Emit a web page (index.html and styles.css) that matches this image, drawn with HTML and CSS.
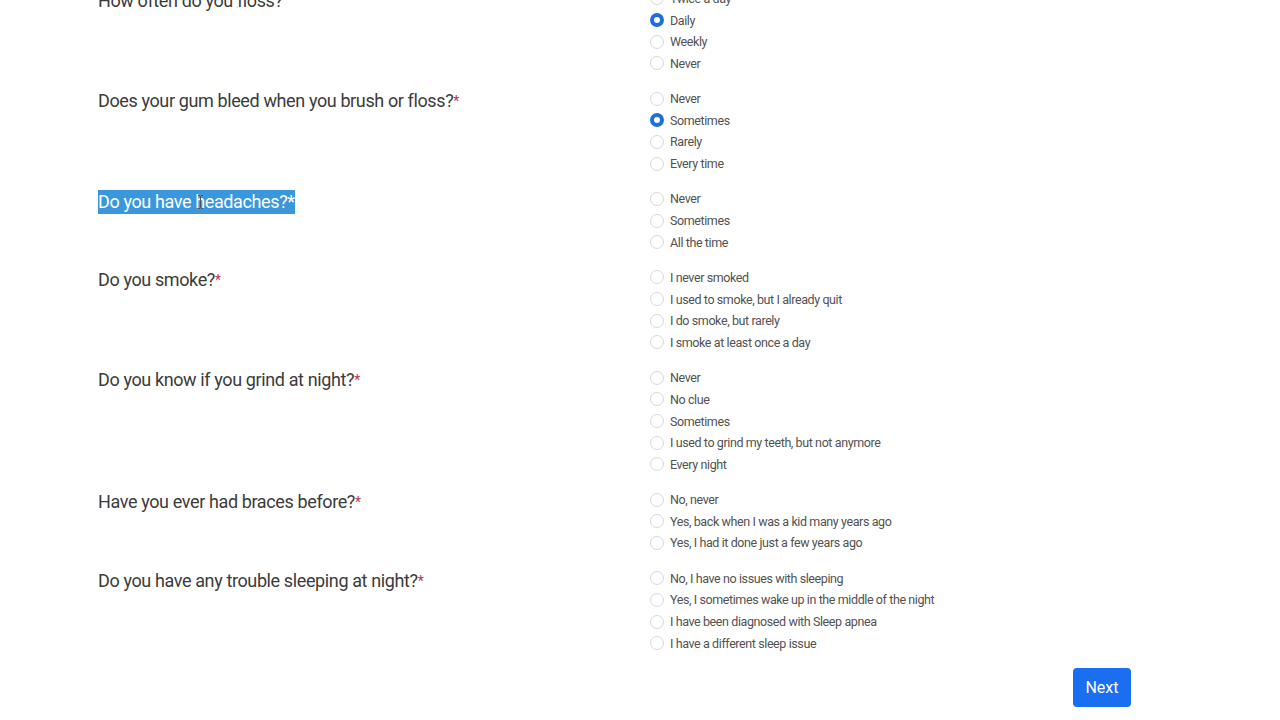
FILE: index.html
```html
<!DOCTYPE html>
<html lang="en">
<head>
<meta charset="utf-8">
<title>Questionnaire</title>
<link rel="stylesheet" href="styles.css">
</head>
<body>
<form class="survey">
  <div class="row">
    <div class="question">How often do you floss?</div>
    <div class="options">
      <label class="opt"><span class="radio"></span>Twice a day</label>
      <label class="opt"><span class="radio checked"></span>Daily</label>
      <label class="opt"><span class="radio"></span>Weekly</label>
      <label class="opt"><span class="radio"></span>Never</label>
    </div>
  </div>
  <div class="row">
    <div class="question">Does your gum bleed when you brush or floss?<span class="req">*</span></div>
    <div class="options">
      <label class="opt"><span class="radio"></span>Never</label>
      <label class="opt"><span class="radio checked"></span>Sometimes</label>
      <label class="opt"><span class="radio"></span>Rarely</label>
      <label class="opt"><span class="radio"></span>Every time</label>
    </div>
  </div>
  <div class="row">
    <div class="question"><span class="selected">Do you have headaches?*<svg class="ibeam" width="7" height="14" viewBox="0 0 7 14"><path d="M1 0.5h2M4 0.5h2M3.5 1v12M1 13.5h2M4 13.5h2" stroke="#555" stroke-width="1" fill="none"/></svg></span></div>
    <div class="options">
      <label class="opt"><span class="radio"></span>Never</label>
      <label class="opt"><span class="radio"></span>Sometimes</label>
      <label class="opt"><span class="radio"></span>All the time</label>
    </div>
  </div>
  <div class="row">
    <div class="question">Do you smoke?<span class="req">*</span></div>
    <div class="options">
      <label class="opt"><span class="radio"></span>I never smoked</label>
      <label class="opt"><span class="radio"></span>I used to smoke, but I already quit</label>
      <label class="opt"><span class="radio"></span>I do smoke, but rarely</label>
      <label class="opt"><span class="radio"></span>I smoke at least once a day</label>
    </div>
  </div>
  <div class="row">
    <div class="question">Do you know if you grind at night?<span class="req">*</span></div>
    <div class="options">
      <label class="opt"><span class="radio"></span>Never</label>
      <label class="opt"><span class="radio"></span>No clue</label>
      <label class="opt"><span class="radio"></span>Sometimes</label>
      <label class="opt"><span class="radio"></span>I used to grind my teeth, but not anymore</label>
      <label class="opt"><span class="radio"></span>Every night</label>
    </div>
  </div>
  <div class="row">
    <div class="question">Have you ever had braces before?<span class="req">*</span></div>
    <div class="options">
      <label class="opt"><span class="radio"></span>No, never</label>
      <label class="opt"><span class="radio"></span>Yes, back when I was a kid many years ago</label>
      <label class="opt"><span class="radio"></span>Yes, I had it done just a few years ago</label>
    </div>
  </div>
  <div class="row">
    <div class="question">Do you have any trouble sleeping at night?<span class="req">*</span></div>
    <div class="options">
      <label class="opt"><span class="radio"></span>No, I have no issues with sleeping</label>
      <label class="opt"><span class="radio"></span>Yes, I sometimes wake up in the middle of the night</label>
      <label class="opt"><span class="radio"></span>I have been diagnosed with Sleep apnea</label>
      <label class="opt"><span class="radio"></span>I have a different sleep issue</label>
    </div>
  </div>
  <div class="actions">
    <button type="button" class="btn-next">Next</button>
  </div>
</form>
</body>
</html>
```
FILE: styles.css
```css
html, body {
  margin: 0;
  padding: 0;
  background: #ffffff;
  overflow: hidden;
  height: 720px;
}
body {
  font-family: Roboto, "Liberation Sans", sans-serif;
  color: #3a3a3a;
}
.survey {
  width: 1033px;
  padding-left: 98px;
  margin-top: -12.5px;
  box-sizing: content-box;
}
.row {
  display: flex;
  align-items: flex-start;
  margin-bottom: 13.5px;
}
.question {
  width: 552px;
  flex: none;
  font-size: 18px;
  letter-spacing: -0.38px;
  line-height: 24px;
  padding-top: 1.5px;
  color: #3b3b3b;
}
.req {
  color: #c0344a;
  font-size: 14px;
  vertical-align: 1px;
  letter-spacing: 0;
}
.selected {
  position: relative;
  display: inline-block;
  background: #3a97dc;
  color: #ffffff;
}
.ibeam {
  position: absolute;
  left: 99px;
  top: 5px;
}
.options {
  display: flex;
  flex-direction: column;
}
.opt {
  display: flex;
  align-items: center;
  height: 21.7px;
  font-size: 12.5px;
  letter-spacing: -0.4px;
  color: #525252;
  gap: 6px;
}
.radio {
  width: 12px;
  height: 12px;
  border: 1px solid #d8d8d8;
  border-radius: 50%;
  flex: none;
  background: #fff;
}
.radio.checked {
  width: 6px;
  height: 6px;
  border: 4px solid #1f6fd8;
}
.actions {
  display: flex;
  justify-content: flex-end;
  margin-top: 5px;
}
.btn-next {
  width: 58px;
  height: 39px;
  border: none;
  border-radius: 4px;
  background: #1a6ef0;
  color: #ffffff;
  font-family: Roboto, "Liberation Sans", sans-serif;
  font-size: 16px;
  padding: 0;
  cursor: pointer;
}
```
